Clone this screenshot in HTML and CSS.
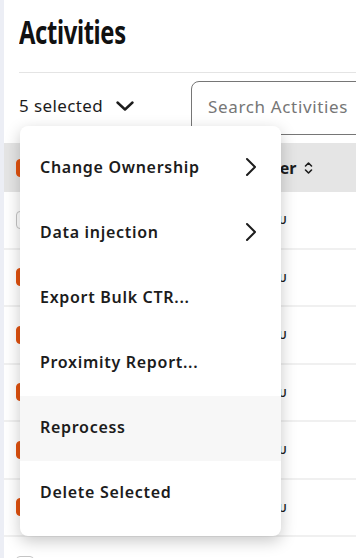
FILE: index.html
```html
<!DOCTYPE html>
<html lang="en">
<head>
    <meta charset="UTF-8">
    <meta name="viewport" content="width=device-width, initial-scale=1.0">
    <title>Activities</title>
    <link rel="stylesheet" href="styles.css">
</head>
<body>
    <div class="page">
        <div class="page-head">
            <h1 class="page-title">Activities</h1>
        </div>

        <div class="toolbar">
            <button class="selected-toggle">
                5 selected
                <svg width="18" height="10" viewBox="0 0 18 10"><path d="M1.5 1.5 L9 8.5 L16.5 1.5" fill="none" stroke="#1c1c1c" stroke-width="2.4" stroke-linecap="round" stroke-linejoin="round"/></svg>
            </button>
            <div class="search-box">Search Activities</div>
        </div>

        <div class="activity-table">
            <div class="table-head">
                <span class="check checked"></span>
                <span class="owner-col">Owner
                    <svg width="9" height="14" viewBox="0 0 9 14"><path d="M1.5 5 L4.5 2 L7.5 5 M1.5 9 L4.5 12 L7.5 9" fill="none" stroke="#1c1c1c" stroke-width="1.6" stroke-linecap="round" stroke-linejoin="round"/></svg>
                </span>
            </div>
            <div class="table-row">
                <span class="check"></span>
                <span class="owner-cell">AU</span>
            </div>
            <div class="table-row">
                <span class="check checked"></span>
                <span class="owner-cell">AU</span>
            </div>
            <div class="table-row">
                <span class="check checked"></span>
                <span class="owner-cell">AU</span>
            </div>
            <div class="table-row">
                <span class="check checked"></span>
                <span class="owner-cell">AU</span>
            </div>
            <div class="table-row">
                <span class="check checked"></span>
                <span class="owner-cell">AU</span>
            </div>
            <div class="table-row">
                <span class="check checked"></span>
                <span class="owner-cell">AU</span>
            </div>
            <div class="table-row">
                <span class="check"></span>
            </div>
        </div>

        <ul class="bulk-menu">
            <li class="menu-item">Change Ownership
                <svg width="12" height="20" viewBox="0 0 12 20"><path d="M2 2 L10 10 L2 18" fill="none" stroke="#1c1c1c" stroke-width="2" stroke-linecap="round" stroke-linejoin="round"/></svg>
            </li>
            <li class="menu-item">Data injection
                <svg width="12" height="20" viewBox="0 0 12 20"><path d="M2 2 L10 10 L2 18" fill="none" stroke="#1c1c1c" stroke-width="2" stroke-linecap="round" stroke-linejoin="round"/></svg>
            </li>
            <li class="menu-item">Export Bulk CTR...</li>
            <li class="menu-item">Proximity Report...</li>
            <li class="menu-item hover">Reprocess</li>
            <li class="menu-item">Delete Selected</li>
        </ul>
    </div>
</body>
</html>
```

FILE: styles.css
```css
html, body {
    margin: 0;
    height: 100%;
}

body {
    background: #eceef5;
    font-family: "Noto Sans", "Open Sans", sans-serif;
    color: #1c1c1c;
    overflow: hidden;
}

.page {
    position: relative;
    margin-left: 4px;
    height: 100%;
    background: #fff;
    overflow: hidden;
}

.page-head {
    margin-left: 15px;
    height: 73px;
    box-sizing: border-box;
    padding-top: 13px;
    border-bottom: 1px solid #e4e4e4;
}

.page-title {
    display: inline-block;
    margin: 0;
    font-family: "Noto Sans", sans-serif;
    font-weight: bold;
    font-size: 33px;
    line-height: 38px;
    letter-spacing: -0.5px;
    color: #111;
    transform: scaleX(0.72);
    transform-origin: left center;
}

.toolbar {
    display: flex;
    align-items: flex-start;
    height: 70px;
    padding-left: 15px;
}

.selected-toggle {
    flex: none;
    display: flex;
    align-items: center;
    gap: 13px;
    width: 172px;
    margin-top: 21px;
    padding: 0;
    border: 0;
    background: none;
    font-family: inherit;
    font-size: 17px;
    letter-spacing: 0.4px;
    color: #1c1c1c;
}

.search-box {
    flex: none;
    margin-top: 8px;
    width: 240px;
    height: 54px;
    box-sizing: border-box;
    border: 1px solid #767676;
    border-radius: 8px;
    padding: 13px 16px;
    font-size: 17px;
    letter-spacing: 0.65px;
    color: #767676;
    white-space: nowrap;
}

.table-head,
.table-row {
    display: flex;
    align-items: center;
    padding-left: 12px;
}

.table-head {
    height: 49px;
    background: #e5e5e5;
}

.table-row {
    height: 57.5px;
    box-sizing: border-box;
    border-bottom: 2px solid #f0f0f0;
}

.check {
    flex: none;
    width: 18px;
    height: 18px;
    box-sizing: border-box;
    border: 1px solid #c4c4c4;
    border-radius: 4px;
    background: #fff;
}

.check.checked {
    border-color: #e2520f;
    background: #e2520f;
}

.owner-col {
    display: flex;
    align-items: center;
    gap: 8px;
    margin-left: 209px;
    font-weight: 700;
    font-size: 16px;
}

.owner-cell {
    margin-left: 237px;
    font-size: 11px;
    font-weight: 600;
    color: #1c1c1c;
}

.bulk-menu {
    position: absolute;
    top: 126px;
    left: 16px;
    width: 261px;
    margin: 0;
    padding: 10px 0;
    list-style: none;
    background: #fff;
    border-radius: 8px;
    box-shadow: 0 5px 16px rgba(0, 0, 0, 0.22);
}

.menu-item {
    display: flex;
    align-items: center;
    justify-content: space-between;
    height: 65px;
    box-sizing: border-box;
    padding: 0 24px 4px 20px;
    font-size: 16px;
    font-weight: 600;
    letter-spacing: 0.7px;
    color: #1c1c1c;
}

.menu-item.hover {
    background: #f7f7f7;
}
```
